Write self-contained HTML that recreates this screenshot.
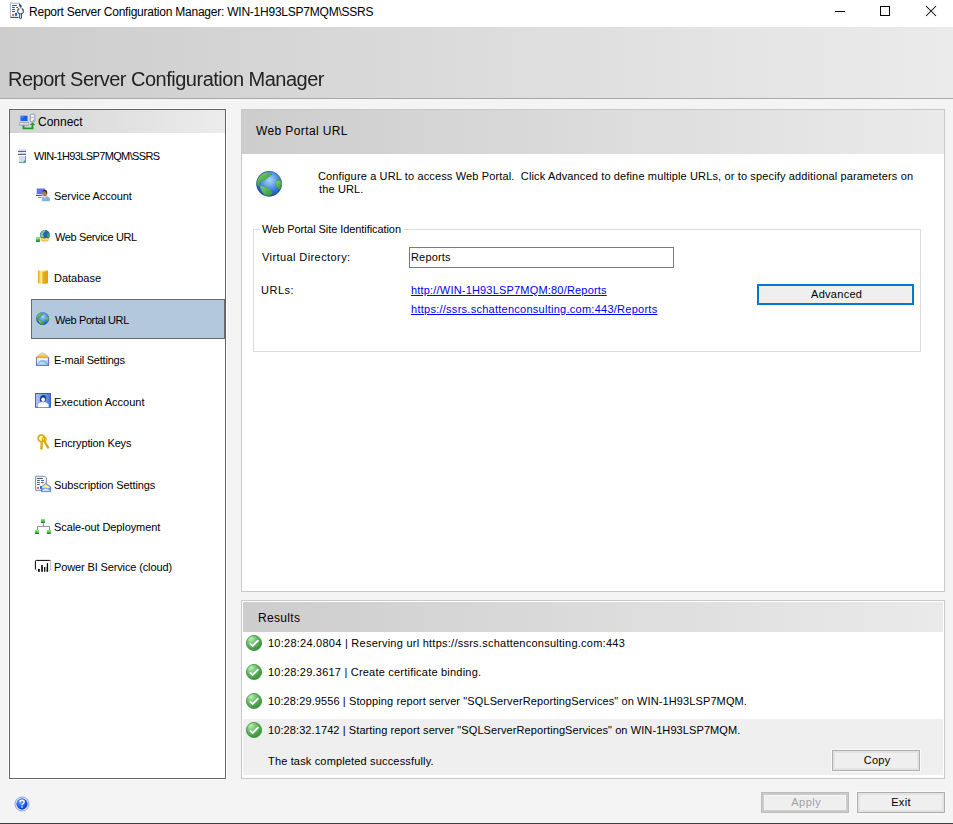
<!DOCTYPE html>
<html><head><meta charset="utf-8">
<style>
*{margin:0;padding:0;box-sizing:border-box}
html,body{width:953px;height:824px;overflow:hidden;background:#f4f4f4;font-family:"Liberation Sans",sans-serif;color:#000}
.a{position:absolute}
.t{position:absolute;white-space:nowrap;line-height:1}
.f11{font-size:11px}
#titlebar{left:0;top:0;width:953px;height:27px;background:#fff}
#hdr{left:0;top:27px;width:953px;height:71px;background:linear-gradient(to right,#cdcdcd,#ebebeb)}
#hdrline{left:0;top:98px;width:953px;height:1px;background:#a8a8a8}
#bottomline{left:0;top:823px;width:953px;height:1px;background:#3c3c3c}
#lp{left:9px;top:109px;width:217px;height:670px;border:1px solid #646464;background:#fff;box-shadow:0 0 0 1px #fff}
#lphdr{left:10px;top:110px;width:215px;height:23px;background:linear-gradient(to right,#d4d4d4,#ececec)}
#sel{left:31px;top:299px;width:194px;height:40px;border:1px solid #6a6a6a;background:#b3c7dd}
#cp{left:241px;top:109px;width:704px;height:483px;border:1px solid #c8c8c8;background:#fff}
#cphdr{left:242px;top:110px;width:702px;height:44px;background:linear-gradient(to right,#cdcdcd,#eaeaea)}
#rp{left:241px;top:600px;width:704px;height:179px;border:1px solid #c8c8c8;background:#fff}
#rphdr{left:243px;top:602px;width:700px;height:30px;background:linear-gradient(to right,#cdcdcd,#eaeaea)}
#rprow{left:243px;top:719px;width:700px;height:56px;background:#efefef}
.gb{left:253px;top:229px;width:668px;height:123px;border:1px solid #dcdcdc}
.btn{position:absolute;border:1px solid #adadad;background:#efefef;box-shadow:inset 0 0 0 2px #e3e3e3,0 0 0 1px #fafafa;font-size:11px;text-align:center;line-height:19px;white-space:nowrap}
.lnk{color:#0000ff;text-decoration:underline}
</style></head>
<body>
<div class="a" id="titlebar"></div>
<div class="a" id="hdr"></div>
<div class="a" id="hdrline"></div>
<div class="a" id="bottomline"></div>

<!-- title -->
<div id="t1" class="t" style="left:29px;top:6px;font-size:12px;letter-spacing:-0.232px">Report Server Configuration Manager: WIN-1H93LSP7MQM\SSRS</div>
<div id="t2" class="t" style="left:8px;top:69px;font-size:20px;letter-spacing:-0.500px;color:#222;will-change:transform">Report Server Configuration Manager</div>

<!-- left panel -->
<div class="a" id="lp"></div>
<div class="a" id="lphdr"></div>
<div class="a" id="sel"></div>
<div id="t3" class="t" style="left:38px;top:116px;font-size:12px">Connect</div>
<div id="t4" class="t f11" style="left:34px;top:151px;letter-spacing:-0.632px">WIN-1H93LSP7MQM\SSRS</div>
<div id="t5" class="t f11" style="left:54px;top:191px;letter-spacing:-0.071px">Service Account</div>
<div id="t6" class="t f11" style="left:55px;top:232px;letter-spacing:-0.357px">Web Service URL</div>
<div id="t7" class="t f11" style="left:54px;top:273px">Database</div>
<div id="t8" class="t f11" style="left:55px;top:315px;letter-spacing:-0.385px">Web Portal URL</div>
<div id="t9" class="t f11" style="left:54px;top:355px;letter-spacing:-0.214px">E-mail Settings</div>
<div id="t10" class="t f11" style="left:54px;top:397px">Execution Account</div>
<div id="t11" class="t f11" style="left:54px;top:438px;letter-spacing:-0.143px">Encryption Keys</div>
<div id="t12" class="t f11" style="left:54px;top:480px;letter-spacing:-0.100px">Subscription Settings</div>
<div id="t13" class="t f11" style="left:54px;top:522px;letter-spacing:-0.105px">Scale-out Deployment</div>
<div id="t14" class="t f11" style="left:54px;top:562px;letter-spacing:-0.130px">Power BI Service (cloud)</div>

<!-- content panel -->
<div class="a" id="cp"></div>
<div class="a" id="cphdr"></div>
<div id="t15" class="t" style="left:256px;top:125px;font-size:12px;letter-spacing:0.385px">Web Portal URL</div>
<div id="t16" class="t f11" style="left:318px;top:171px;letter-spacing:0.138px">Configure a URL to access Web Portal.&nbsp; Click Advanced to define multiple URLs, or to specify additional parameters on</div>
<div id="t17" class="t f11" style="left:319px;top:184px;letter-spacing:0.138px">the URL.</div>
<div class="a gb"></div>
<div class="a" style="left:260px;top:224px;width:144px;height:12px;background:#fff"></div>
<div id="t18" class="t f11" style="left:262px;top:224px;letter-spacing:-0.069px">Web Portal Site Identification</div>
<div id="t19" class="t f11" style="left:262px;top:252px;letter-spacing:0.412px">Virtual Directory:</div>
<div class="a" style="left:409px;top:247px;width:265px;height:21px;border:1px solid #7a7a7a;background:#fff"></div>
<div id="t20" class="t f11" style="left:411px;top:252px;letter-spacing:0.17px">Reports</div>
<div id="t21" class="t f11" style="left:261px;top:285px;letter-spacing:0.500px">URLs:</div>
<div id="t22" class="t f11 lnk" style="left:411px;top:285px;letter-spacing:0.188px">http://WIN-1H93LSP7MQM:80/Reports</div>
<div id="t23" class="t f11 lnk" style="left:411px;top:304px;letter-spacing:0.261px">https://ssrs.schattenconsulting.com:443/Reports</div>
<div class="btn" style="left:757px;top:284px;width:157px;height:21px;border:2px solid #0078d7;box-shadow:inset 0 0 0 1px #f6efe8;line-height:17px;letter-spacing:0.28px;text-indent:2.28px">Advanced</div>

<!-- results -->
<div class="a" id="rp"></div>
<div class="a" id="rphdr"></div>
<div class="a" id="rprow"></div>
<div id="t24" class="t" style="left:258px;top:612px;font-size:12px;letter-spacing:0.333px">Results</div>
<div id="t25" class="t f11" style="left:268px;top:638px;letter-spacing:0.250px">10:28:24.0804 | Reserving url https://ssrs.schattenconsulting.com:443</div>
<div id="t26" class="t f11" style="left:268px;top:667px;letter-spacing:0.214px">10:28:29.3617 | Create certificate binding.</div>
<div id="t27" class="t f11" style="left:268px;top:696px;letter-spacing:0.105px">10:28:29.9556 | Stopping report server "SQLServerReportingServices" on WIN-1H93LSP7MQM.</div>
<div id="t28" class="t f11" style="left:268px;top:725px;letter-spacing:0.093px">10:28:32.1742 | Starting report server "SQLServerReportingServices" on WIN-1H93LSP7MQM.</div>
<div id="t29" class="t f11" style="left:268px;top:756px;letter-spacing:0.161px">The task completed successfully.</div>
<div class="btn" style="left:832px;top:750px;width:88px;height:21px;letter-spacing:0.25px;text-indent:2.25px">Copy</div>

<div class="btn" style="left:761px;top:792px;width:88px;height:21px;border:1px solid #bcbcbc;box-shadow:inset 0 0 0 2px #cacaca,inset 0 0 0 3px #f6f6f6;color:#a0a0a0;line-height:19px;letter-spacing:0.5px;text-indent:2.5px">Apply</div>
<div class="btn" style="left:857px;top:792px;width:88px;height:21px;letter-spacing:0.33px">Exit</div>

<!-- icons -->
<svg width="0" height="0" style="position:absolute">
<defs>
<radialGradient id="gOcean" cx="0.52" cy="0.36" r="0.7"><stop offset="0" stop-color="#b0d6fa"/><stop offset="0.55" stop-color="#3f86e2"/><stop offset="1" stop-color="#1238a0"/></radialGradient>
<linearGradient id="gLand" x1="0" y1="0" x2="0.7" y2="1"><stop offset="0" stop-color="#88d870"/><stop offset="1" stop-color="#35963c"/></linearGradient>
<clipPath id="cGlobe"><circle cx="16.1" cy="15.8" r="12.75"/></clipPath>

<radialGradient id="gCheck" cx="0.3" cy="0.22" r="0.9"><stop offset="0" stop-color="#b6f2b0"/><stop offset="0.45" stop-color="#66b664"/><stop offset="1" stop-color="#2e8a32"/></radialGradient>

<linearGradient id="gGold" x1="0" y1="0" x2="1" y2="0"><stop offset="0" stop-color="#e8a810"/><stop offset="0.35" stop-color="#f8f0b0"/><stop offset="0.5" stop-color="#e8b020"/><stop offset="1" stop-color="#e0a000"/></linearGradient>
<linearGradient id="gFlap" x1="0" y1="0" x2="0" y2="1"><stop offset="0" stop-color="#fff4b0"/><stop offset="1" stop-color="#f09a10"/></linearGradient>
<linearGradient id="gEnv" x1="0" y1="0" x2="1" y2="1"><stop offset="0" stop-color="#ffffff"/><stop offset="1" stop-color="#80c0f8"/></linearGradient>
<linearGradient id="gExec" x1="0" y1="0" x2="1" y2="0"><stop offset="0" stop-color="#b0c8f4"/><stop offset="1" stop-color="#4a78d0"/></linearGradient>
<linearGradient id="gGreenSq" x1="0" y1="0" x2="0" y2="1"><stop offset="0" stop-color="#a8e070"/><stop offset="0.6" stop-color="#40b858"/><stop offset="1" stop-color="#0a7a28"/></linearGradient>
<radialGradient id="gHelp" cx="0.35" cy="0.3" r="0.8"><stop offset="0" stop-color="#6aa0ff"/><stop offset="0.6" stop-color="#1a5cf0"/><stop offset="1" stop-color="#0030c0"/></radialGradient>
</defs>
</svg>

<!-- title icon -->
<svg class="a" style="left:7px;top:1px" width="20" height="20" viewBox="0 0 20 20">
<path d="M3.4 2.2 H12.4 L13.6 3.4 V16.4 H3.4 Z" fill="#fafcff" stroke="#98a8c0" stroke-width="0.9"/>
<rect x="3.6" y="15.9" width="7.6" height="0.9" fill="#2a3850"/>
<path d="M12 2.6 L14.6 4.8 L14.6 6.6 L12.4 5.2Z" fill="#1f2f48"/>
<rect x="5.1" y="4" width="4.8" height="0.9" fill="#303848"/>
<rect x="5.1" y="6" width="2.7" height="0.9" fill="#303848"/><rect x="9.2" y="6" width="1.6" height="0.9" fill="#303848"/>
<rect x="5.1" y="8" width="2.7" height="0.9" fill="#303848"/>
<rect x="5.1" y="10" width="2.7" height="0.9" fill="#303848"/>
<rect x="5.1" y="13.1" width="1.9" height="1.7" fill="#ff4010"/>
<rect x="8" y="11.9" width="2" height="2.9" fill="#0a60f0"/>
<rect x="12.2" y="11" width="2.7" height="6.8" rx="0.8" fill="#2c3c58"/>
<rect x="13.1" y="12" width="0.9" height="5" fill="#e8f0fc"/>
<circle cx="13.55" cy="10" r="3.3" fill="#2c3c58"/>
<circle cx="13.55" cy="10.2" r="2.3" fill="#f4f8ff"/>
<path d="M11.6 7.2 L15.5 7.2 L13.55 10.2 Z" fill="#fff"/>
</svg>

<!-- window controls -->
<div class="a" style="left:835px;top:11px;width:10px;height:1px;background:#000"></div>
<div class="a" style="left:880px;top:6px;width:10px;height:10px;border:1px solid #000"></div>
<svg class="a" style="left:925px;top:5px" width="12" height="12" viewBox="0 0 12 12"><path d="M1 1 L11 11 M11 1 L1 11" stroke="#000" stroke-width="1.05"/></svg>

<!-- connect icon -->
<svg class="a" style="left:17px;top:111px" width="20" height="20" viewBox="0 0 20 20">
<rect x="2.3" y="3.2" width="9.6" height="7.6" fill="#e4eaf4" stroke="#c0c8d8" stroke-width="0.5"/>
<rect x="3.4" y="4.6" width="7.2" height="5.4" fill="#1f5ee6"/>
<rect x="3.6" y="4.8" width="3" height="2.2" fill="#5a92f4" opacity="0.7"/>
<rect x="2.2" y="11.1" width="9.8" height="3.7" rx="0.5" fill="#9aa4b8"/>
<rect x="2.8" y="11.8" width="8.6" height="1.8" fill="#d8dee8"/>
<rect x="3.2" y="12" width="2.5" height="1.2" fill="#e0f0a0"/>
<rect x="13.3" y="3.2" width="4.5" height="7.6" rx="1.1" fill="#eef2f8" stroke="#7a86a0" stroke-width="0.8"/>
<rect x="14.2" y="6" width="2.8" height="0.6" fill="#9aa4b8"/>
<circle cx="16.4" cy="9.3" r="0.6" fill="#30b030"/>
<path d="M6.5 14.6 V17.4 H15.5 V12.8" fill="none" stroke="#1f9a1f" stroke-width="1.9"/>
<path d="M12.9 14 L15.5 11.2 L18.1 14 Z" fill="#1f9a1f"/>
</svg>

<!-- server icon -->
<svg class="a" style="left:14px;top:146px" width="16" height="20" viewBox="0 0 16 20">
<rect x="4.9" y="2.9" width="7.1" height="2.2" fill="#dce4f8"/>
<rect x="4" y="4.9" width="8" height="1.2" fill="#5e6474"/>
<rect x="4.9" y="6.1" width="7.1" height="1.7" fill="#e0e8fa"/>
<rect x="4" y="7.8" width="8" height="1.2" fill="#5e6474"/>
<rect x="4.9" y="10" width="7.1" height="7" fill="#d2daf0"/>
<rect x="11" y="10" width="1" height="7" fill="#8090bc"/>
<rect x="4.9" y="16" width="7.1" height="1" fill="#8090bc"/>
<circle cx="10.4" cy="15.4" r="0.8" fill="#10c020"/>
</svg>

<!-- service account -->
<svg class="a" style="left:34px;top:186px" width="18" height="18" viewBox="0 0 18 18">
<rect x="2.2" y="2.1" width="9.2" height="6.8" fill="#ecebdc"/>
<rect x="2.8" y="2.6" width="8.1" height="5.6" fill="#6472ee"/>
<rect x="2" y="9" width="6.5" height="1" fill="#5a5a5a"/>
<rect x="4.1" y="10.9" width="3.4" height="0.9" fill="#6a6a6a"/>
<ellipse cx="10.9" cy="7.3" rx="2.3" ry="3.1" fill="#b47846"/>
<path d="M8.5 6.5 Q8.6 3.6 11 3.7 Q13.4 3.9 13.2 7.2 L12.7 8.6 Q12.4 5.4 10.3 5.3 Q9 5.3 8.5 6.5Z" fill="#2e2e2e"/>
<path d="M7.9 15.3 L8.1 11.6 Q8.9 10.1 10.8 10.1 Q14.6 10.1 15.9 12.2 L16 15.3 Z" fill="#84b2e2"/>
<path d="M10 10.3 L11 13.2 L11.8 10.3Z" fill="#e8f0fa"/>
</svg>

<!-- web service url -->
<svg class="a" style="left:34px;top:227px" width="18" height="18" viewBox="0 0 18 18">
<circle cx="10.9" cy="8" r="5" fill="#2f5cb4"/>
<path d="M6.5 6.5 Q8 3.4 11 3.1 L11.5 4.5 L9.8 5.5 L8.8 7.5 L10.2 9.5 L8.6 10.8 L6.2 9.2Z" fill="#7cc888"/>
<path d="M13.2 6.3 L15.6 7 L15.8 10 L13.4 10.2Z" fill="#3fa860"/>
<path d="M6.4 11.2 Q8.2 10.6 10 11.4 Q12.4 10.5 15 11.6 L14.6 13.8 Q12.5 15 10.5 14.8 Q8 14.8 6.6 13.6 Z" fill="#eec462"/>
<path d="M7 12 Q9 11.6 10.5 12.4 Q12.4 11.7 14.2 12.2" fill="none" stroke="#fff0b0" stroke-width="0.7"/>
<rect x="2" y="9.8" width="3.9" height="5.2" fill="url(#gGreenSq)"/>
<rect x="2.6" y="10.6" width="1.6" height="1.2" fill="#d0f0c0" opacity="0.8"/>
</svg>

<!-- database -->
<svg class="a" style="left:34px;top:268px" width="18" height="18" viewBox="0 0 18 18">
<path d="M3.9 2.6 Q9 1.6 14 2.6 V15.2 Q9 16.2 3.9 15.2 Z" fill="url(#gGold)"/>
<path d="M3.9 2.6 Q9 1.6 14 2.6 Q9 4.6 3.9 2.6Z" fill="#fff4c0"/>
</svg>

<!-- web portal url (small globe) -->
<svg class="a" style="left:34px;top:310px" width="17" height="17" viewBox="-1.2 -1.2 34 34">
<circle cx="16.1" cy="15.8" r="12.75" fill="url(#gOcean)"/>
<g clip-path="url(#cGlobe)" fill="url(#gLand)" stroke="#2a7a30" stroke-width="0.35" stroke-opacity="0.6">
<path d="M3 17.5 L3.6 12.2 L6.4 8.1 L9.8 5.4 L14.9 3.6 L15.4 5.2 L16.9 8.4 L14.9 9.3 L12.2 11.8 L8.8 13.2 L6.4 14.4 L6.1 16.6 L7.4 17.5 L6.8 18 Z"/>
<path d="M6.8 17.6 L9.8 18.3 L12.2 19.3 L15.6 20.3 L17.3 21.7 L19.7 24.4 L19 26.8 L16.3 28.6 L12.2 28.2 L9.1 24.1 L8.1 21 L7.1 19 Z"/>
<path d="M23.1 12.9 L27.8 12.2 L29.5 14.2 L29.5 21 L26.5 21.7 L24.4 19.7 L22.7 16.6 Z"/>
<path d="M25.1 9.1 L26.8 9.8 L26.5 11.9 L25.1 11.5 Z"/>
<path d="M16.3 5.1 L18.3 5.1 L19 7.1 L17 7.1 Z"/>
</g>
<circle cx="16.1" cy="15.8" r="12.5" fill="none" stroke="#10307a" stroke-opacity="0.45" stroke-width="0.7"/>
</svg>

<!-- email -->
<svg class="a" style="left:34px;top:350px" width="18" height="18" viewBox="0 0 18 18">
<rect x="2.5" y="7.5" width="12.1" height="7.9" fill="url(#gEnv)" stroke="#5866b4" stroke-width="0.9"/>
<path d="M2.2 7 L8.5 2.3 L14.8 7 L14.8 8.6 L2.2 8.6 Z" fill="url(#gFlap)" stroke="#6a78c0" stroke-width="0.6" stroke-dasharray="0.8 0.6"/>
<rect x="3.2" y="8.2" width="10.6" height="1.6" fill="#f4f8ff"/>
<path d="M3.2 14.8 L6.5 11 H10.5 L14 14.8" fill="none" stroke="#6a78c8" stroke-width="0.8"/>
</svg>

<!-- execution account -->
<svg class="a" style="left:34px;top:392px" width="18" height="18" viewBox="0 0 18 18">
<rect x="1.6" y="1.5" width="14.8" height="13.8" fill="url(#gExec)" stroke="#2352c4" stroke-width="0.9"/>
<path d="M6 9.6 Q5.5 3.1 9.1 3.1 Q12.5 3.2 12 7.5 L11.4 9.6Z" fill="#183a8e"/>
<ellipse cx="9.2" cy="7.6" rx="1.9" ry="2.1" fill="#fff"/>
<path d="M4.1 15.3 V12.2 Q6 9.7 9 9.7 Q12.6 9.7 14.6 12.2 V15.3Z" fill="#fff"/>
<path d="M8.4 9.8 L9.2 11.6 L10 9.8Z" fill="#a8b8e0"/>
</svg>

<!-- encryption keys -->
<svg class="a" style="left:32px;top:432px" width="20" height="20" viewBox="0 0 20 20">
<path d="M12.2 9 L16.6 16.4" stroke="#d4a412" stroke-width="2.1"/>
<path d="M9.6 9.2 V17.4" stroke="#dcac18" stroke-width="2.4"/>
<path d="M8.2 16.4 H9" stroke="#d0a010" stroke-width="1.2"/>
<circle cx="9.4" cy="6.3" r="3.3" fill="#fff2b8" stroke="#d8a810" stroke-width="1.5"/>
<circle cx="12.3" cy="7.2" r="1.9" fill="none" stroke="#d8a810" stroke-width="1.2"/>
</svg>

<!-- subscription settings -->
<svg class="a" style="left:32px;top:474px" width="20" height="20" viewBox="0 0 20 20">
<path d="M3.6 2.3 H12.8 L14.4 3.9 V16.3 H3.6 Z" fill="#f2faff" stroke="#6e7ea6" stroke-width="0.9"/>
<rect x="5.1" y="4" width="5.8" height="0.9" fill="#303c58"/>
<rect x="5.1" y="6" width="2.7" height="0.9" fill="#3c4a6a"/><rect x="9.1" y="6" width="2.8" height="0.9" fill="#3c4a6a"/>
<rect x="5.1" y="8" width="2.7" height="0.9" fill="#3c4a6a"/><rect x="9.1" y="8" width="2.8" height="0.9" fill="#3c4a6a"/>
<rect x="5.1" y="10" width="2.7" height="0.9" fill="#3c4a6a"/>
<rect x="5.1" y="13.1" width="1.9" height="1.7" fill="#ff4010"/>
<rect x="8" y="12.1" width="2" height="2.7" fill="#0a64f0"/>
<path d="M9.4 17.6 V12.8 L13.8 9.3 L18.8 13 V17.6 Z" fill="#6890e0" stroke="#5060b0" stroke-width="0.6"/>
<path d="M10 13 L13.6 10 L18.2 13.4 L16 14.6 L13 13.6 L10.8 14.6Z" fill="#fff080"/>
<path d="M10 17 L12.5 14.5 L15.5 15 L18.2 16.8Z" fill="#d8ecff"/>
</svg>

<!-- scale-out -->
<svg class="a" style="left:32px;top:516px" width="20" height="20" viewBox="0 0 20 20">
<path d="M11.4 7 V10.4 M5.5 14 V10.4 H17.5 V14" fill="none" stroke="#8c8c8c" stroke-width="1"/>
<rect x="9" y="2.9" width="3.9" height="4.1" fill="url(#gGreenSq)"/>
<rect x="2.9" y="14" width="4" height="4" fill="url(#gGreenSq)"/>
<rect x="14.9" y="14" width="4" height="4" fill="url(#gGreenSq)"/>
</svg>

<!-- power bi -->
<svg class="a" style="left:32px;top:557px" width="20" height="20" viewBox="0 0 20 20">
<path d="M3.4 12.5 V4.4 Q3.4 3.4 4.4 3.4 H17.6 Q18.4 3.4 18.4 4.2" fill="none" stroke="#000" stroke-width="1"/>
<path d="M18.6 4.6 V12.4" stroke="#b0b0b0" stroke-width="0.8"/>
<path d="M4.2 13.2 L5 13.5 M17.3 13.6 L18.5 12.4" stroke="#555" stroke-width="0.7"/>
<rect x="6" y="11.9" width="1.8" height="2.9" fill="#000"/>
<rect x="9.2" y="8.1" width="1.6" height="6.7" fill="#000"/>
<rect x="12.1" y="10" width="1" height="4.8" fill="#000"/>
<rect x="13.2" y="9.8" width="1.4" height="5" fill="#9a9a9a"/>
<rect x="14.8" y="6.1" width="1.3" height="8.7" fill="#000"/>
</svg>

<!-- big globe -->
<svg class="a" style="left:253px;top:168px" width="32" height="32" viewBox="0 0 32 32">
<circle cx="16.1" cy="15.8" r="12.75" fill="url(#gOcean)"/>
<g clip-path="url(#cGlobe)" fill="url(#gLand)" stroke="#2a7a30" stroke-width="0.35" stroke-opacity="0.6">
<path d="M3 17.5 L3.6 12.2 L6.4 8.1 L9.8 5.4 L14.9 3.6 L15.4 5.2 L16.9 8.4 L14.9 9.3 L12.2 11.8 L8.8 13.2 L6.4 14.4 L6.1 16.6 L7.4 17.5 L6.8 18 Z"/>
<path d="M6.8 17.6 L9.8 18.3 L12.2 19.3 L15.6 20.3 L17.3 21.7 L19.7 24.4 L19 26.8 L16.3 28.6 L12.2 28.2 L9.1 24.1 L8.1 21 L7.1 19 Z"/>
<path d="M23.1 12.9 L27.8 12.2 L29.5 14.2 L29.5 21 L26.5 21.7 L24.4 19.7 L22.7 16.6 Z"/>
<path d="M25.1 9.1 L26.8 9.8 L26.5 11.9 L25.1 11.5 Z"/>
<path d="M16.3 5.1 L18.3 5.1 L19 7.1 L17 7.1 Z"/>
</g>
<circle cx="16.1" cy="15.8" r="12.5" fill="none" stroke="#10307a" stroke-opacity="0.45" stroke-width="0.7"/>
</svg>

<!-- checks -->
<svg class="a" style="left:246px;top:635px" width="16" height="16" viewBox="0 0 16 16">
<circle cx="8" cy="8" r="7.6" fill="url(#gCheck)" stroke="#3b8f3b" stroke-width="0.8"/>
<path d="M3.9 8.3 L6.6 11 L12.4 5.1" fill="none" stroke="#fff" stroke-width="1.9"/>
</svg>
<svg class="a" style="left:246px;top:664px" width="16" height="16" viewBox="0 0 16 16">
<circle cx="8" cy="8" r="7.6" fill="url(#gCheck)" stroke="#3b8f3b" stroke-width="0.8"/>
<path d="M3.9 8.3 L6.6 11 L12.4 5.1" fill="none" stroke="#fff" stroke-width="1.9"/>
</svg>
<svg class="a" style="left:246px;top:693px" width="16" height="16" viewBox="0 0 16 16">
<circle cx="8" cy="8" r="7.6" fill="url(#gCheck)" stroke="#3b8f3b" stroke-width="0.8"/>
<path d="M3.9 8.3 L6.6 11 L12.4 5.1" fill="none" stroke="#fff" stroke-width="1.9"/>
</svg>
<svg class="a" style="left:246px;top:722px" width="16" height="16" viewBox="0 0 16 16">
<circle cx="8" cy="8" r="7.6" fill="url(#gCheck)" stroke="#3b8f3b" stroke-width="0.8"/>
<path d="M3.9 8.3 L6.6 11 L12.4 5.1" fill="none" stroke="#fff" stroke-width="1.9"/>
</svg>

<!-- help -->
<svg class="a" style="left:14px;top:796px" width="16" height="16" viewBox="0 0 16 16">
<circle cx="8" cy="8" r="7" fill="#eef4ff" stroke="#6a8ee0" stroke-width="0.8"/>
<circle cx="8" cy="8" r="5.4" fill="url(#gHelp)" stroke="#1840c0" stroke-width="0.4"/>
<path d="M6 6.3 Q6 4.3 8.1 4.3 Q10.1 4.3 10.1 6 Q10.1 7.2 8.8 7.8 Q8 8.2 8 9.3" fill="none" stroke="#fff" stroke-width="1.4"/>
<rect x="7.3" y="10.3" width="1.4" height="1.4" fill="#fff"/>
</svg>

</body></html>
